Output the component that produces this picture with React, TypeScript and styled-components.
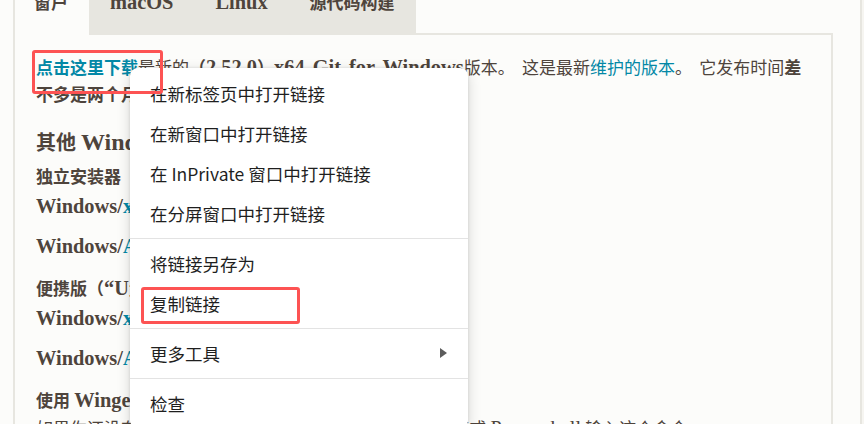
import { FC } from "react";
import styled, { createGlobalStyle } from "styled-components";

const TEXT = "#4e443c";
const LINK = "#0388a6";
const RULE = "#e7e6e0";
const PAPER = "#fcfcfa";
const ALERT = "#fd5353";

const GlobalStyle = createGlobalStyle`
  html, body {
    margin: 0;
    height: 100%;
    overflow: hidden;
    background: ${PAPER};
  }
  body {
    font-family: "Liberation Serif", "Noto Sans CJK SC", serif;
    color: ${TEXT};
  }
`;

const Page = styled.div`
  position: relative;
  display: flex;
  height: 424px;
  padding-left: 13px;
  overflow: hidden;
`;

const Main = styled.main`
  flex: 0 0 820px;
  margin-top: -27px;
`;

const Aside = styled.aside`
  flex: 1;
  margin-left: 27px;
  border-left: 2px solid ${RULE};
  background: #f6f5f1;
`;

const TabBar = styled.ul`
  position: relative;
  z-index: 1;
  display: flex;
  margin: 0 0 -2px;
  padding: 0;
  list-style: none;
`;

const Tab = styled.li<{ $active?: boolean }>`
  padding: 18px 21px;
  padding-left: ${(p) => (p.$active ? "19px" : "21px")};
  line-height: 26px;
  font-size: 17px;
  font-weight: bold;
  background: ${(p) => (p.$active ? PAPER : RULE)};
  border-left: ${(p) => (p.$active ? `2px solid ${RULE}` : "none")};
  border-bottom-left-radius: ${(p) => (p.$active ? "0" : "2px")};
`;

const Panel = styled.section`
  height: 600px;
  padding: 20px 22px 40px 21px;
  border: 2px solid ${RULE};
  background: ${PAPER};
`;

// latin runs sit a little larger than the CJK text around them
const Latin = styled.span`
  font-size: 1.2em;
  line-height: 1;
`;

const Link = styled.a<{ $bold?: boolean }>`
  color: ${LINK};
  text-decoration: none;
  font-weight: ${(p) => (p.$bold ? "bold" : "normal")};
`;

const Lead = styled.p`
  margin: 0;
  font-size: 17px;
  line-height: 27px;
  word-spacing: 3px;
`;

const SectionTitle = styled.h3`
  margin: 20px 0 0;
  font-size: 20px;
  line-height: 28px;
  font-weight: bold;
`;

const Subhead = styled.h4`
  margin: 16px 0 4px;
  font-size: 17px;
  line-height: 24px;
  font-weight: bold;

  ${SectionTitle} + & {
    margin-top: 9px;
  }
`;

const DownloadLine = styled.p`
  margin: 0 0 12px;
  font-size: 17px;
  line-height: 28px;
  font-weight: bold;
`;

const Note = styled.p`
  margin: 0;
  font-size: 17px;
  line-height: 20px;
`;

const Callout = styled.div<{ $x: number; $y: number; $w: number; $h: number }>`
  position: absolute;
  left: ${(p) => p.$x}px;
  top: ${(p) => p.$y}px;
  width: ${(p) => p.$w}px;
  height: ${(p) => p.$h}px;
  box-sizing: border-box;
  border: 3px solid ${ALERT};
  border-radius: 3px;
  pointer-events: none;
  z-index: 3;
`;

const Menu = styled.ul`
  position: absolute;
  left: 130px;
  top: 68px;
  z-index: 2;
  width: 338px;
  margin: 0;
  padding: 5px 0;
  list-style: none;
  background: #fff;
  border-radius: 8px;
  box-shadow: 0 4px 14px rgba(0, 0, 0, 0.16), 0 0 3px rgba(0, 0, 0, 0.12);
  font-family: "Noto Sans CJK SC", "Noto Sans", sans-serif;
  font-size: 17.5px;
  color: #1f1f1f;
`;

const MenuItem = styled.li`
  position: relative;
  display: flex;
  align-items: center;
  justify-content: space-between;
  height: 40px;
  padding: 0 21px 0 20px;
`;

const Divider = styled.li`
  height: 1px;
  margin: 5px 0 4px;
  background: #e3e3e3;
`;

const SubmenuArrow: FC = () => (
  <svg width="7" height="10" viewBox="0 0 7 10">
    <path d="M0 0 L7 5 L0 10 Z" fill="#5c5c5c" />
  </svg>
);

const tabs = ["窗户", "macOS", "Linux", "源代码构建"];

const App: FC = () => {
  return (
    <>
      <GlobalStyle />
      <Page>
        <Main>
          <TabBar>
            {tabs.map((t, i) => (
              <Tab key={t} $active={i === 0}>
                {/^[A-Za-z]/.test(t) ? <Latin>{t}</Latin> : t}
              </Tab>
            ))}
          </TabBar>
          <Panel>
            <Lead>
              <Link $bold href="#">点击这里下载</Link>
              最新的<strong>（<Latin>2.52.0</Latin>）<Latin>x64 Git for Windows</Latin></strong>
              版本。 这是最新<Link href="#">维护的版本</Link>。 它发布时间
              <strong>差<br />不多是两个月前</strong>，在 <Latin>2025-11-17</Latin>。
            </Lead>
            <SectionTitle>
              其他 <Latin>Windows</Latin> 下载
            </SectionTitle>
            <Subhead>独立安装器</Subhead>
            <DownloadLine>
              <Latin>Windows/</Latin>
              <Link $bold href="#"><Latin>x64</Latin> 安装程序。</Link>
            </DownloadLine>
            <DownloadLine>
              <Latin>Windows/</Latin>
              <Link $bold href="#"><Latin>ARM64</Latin> 安装程序。</Link>
            </DownloadLine>
            <Subhead>
              便携版（<Latin>“U</Latin>盘版<Latin>”</Latin>）
            </Subhead>
            <DownloadLine>
              <Latin>Windows/</Latin>
              <Link $bold href="#"><Latin>x64</Latin> 便携版。</Link>
            </DownloadLine>
            <DownloadLine>
              <Latin>Windows/</Latin>
              <Link $bold href="#"><Latin>ARM64</Latin> 便携版。</Link>
            </DownloadLine>
            <Subhead>
              使用 <Latin>Winget</Latin> 工具
            </Subhead>
            <Note>
              如果你还没有<Latin>Winget</Latin>工具，请先安装，然后在命令提示符或 <Latin>Powershell</Latin> 输入这个命令。
            </Note>
          </Panel>
        </Main>
        <Aside />
        <Callout $x={32} $y={50} $w={131} $h={44} />
        <Menu>
          <MenuItem>在新标签页中打开链接</MenuItem>
          <MenuItem>在新窗口中打开链接</MenuItem>
          <MenuItem>在 InPrivate 窗口中打开链接</MenuItem>
          <MenuItem>在分屏窗口中打开链接</MenuItem>
          <Divider />
          <MenuItem>将链接另存为</MenuItem>
          <MenuItem>
            复制链接
            <Callout $x={11} $y={4} $w={159} $h={37} />
          </MenuItem>
          <Divider />
          <MenuItem>
            更多工具
            <SubmenuArrow />
          </MenuItem>
          <Divider />
          <MenuItem>检查</MenuItem>
        </Menu>
      </Page>
    </>
  );
};

export default App;
